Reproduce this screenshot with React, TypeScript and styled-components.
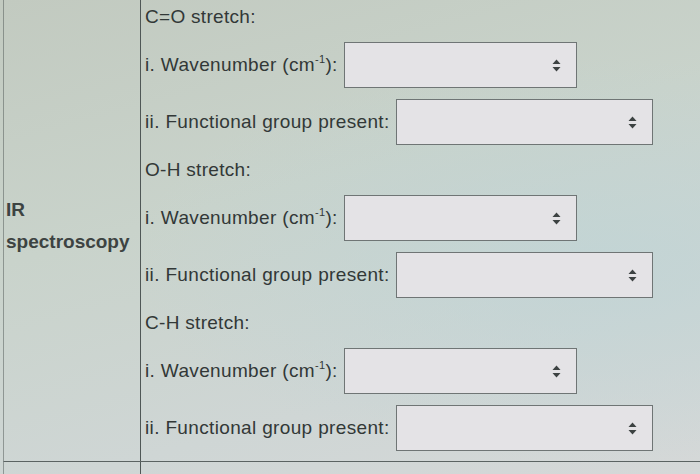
import React from 'react';
import styled, { createGlobalStyle } from 'styled-components';

const GlobalStyle = createGlobalStyle`
  html, body {
    margin: 0;
    padding: 0;
    height: 100%;
    overflow: hidden;
  }
  body {
    font-family: 'Liberation Sans', Arial, sans-serif;
    color: #323837;
    background:
      radial-gradient(ellipse at 85% 55%, rgba(190, 212, 214, 0.7) 0%, rgba(190, 212, 214, 0) 55%),
      linear-gradient(165deg, #c2cac0 0%, #c9d3cb 40%, #cfd6d5 75%, #d5d8d8 100%);
  }
`;

const Table = styled.div`
  display: grid;
  grid-template-columns: 137px 1fr;
  margin-top: -9px;
  margin-left: 3px;
  border-left: 1px solid rgba(80, 88, 86, 0.5);
  border-bottom: 1px solid #5b6362;
`;

const LabelCell = styled.div`
  display: flex;
  flex-direction: column;
  justify-content: center;
  padding-left: 2px;
  border-right: 1px solid #4f5756;
  font-size: 19px;
  font-weight: 700;
  line-height: 32px;
  color: #3d4342;
`;

const FieldCell = styled.div`
  display: flex;
  flex-direction: column;
  gap: 11px;
  padding: 12px 0 10px 4px;
`;

const Title = styled.div`
  height: 28px;
  display: flex;
  align-items: center;
  font-size: 19px;
  letter-spacing: 0.3px;
`;

const Row = styled.div`
  display: flex;
  align-items: center;
  gap: 6px;
  font-size: 19px;
  letter-spacing: 0.35px;
`;

const Sup = styled.sup`
  font-size: 11px;
  line-height: 0;
  vertical-align: 8px;
`;

const SelectBox = styled.div<{ $width: number }>`
  width: ${(p) => p.$width}px;
  height: 46px;
  box-sizing: border-box;
  display: flex;
  align-items: center;
  justify-content: flex-end;
  padding-right: 15px;
  background: #e4e3e6;
  border: 1px solid #6f7575;
`;

const Next = styled.div`
  display: grid;
  grid-template-columns: 137px 1fr;
  height: 20px;
  margin-left: 3px;
  border-left: 1px solid rgba(80, 88, 86, 0.5);
`;

const NextLabel = styled.div`
  border-right: 1px solid #4f5756;
`;

const Arrows = () => (
  <svg width="9" height="13" viewBox="0 0 9 13">
    <path d="M4.5 0.5 L8.5 5 L0.5 5 Z" fill="#3c4242" />
    <path d="M4.5 12.5 L8.5 8 L0.5 8 Z" fill="#3c4242" />
  </svg>
);

const Select = ({ width }: { width: number }) => (
  <SelectBox $width={width}>
    <Arrows />
  </SelectBox>
);

const groups = ['C=O stretch:', 'O-H stretch:', 'C-H stretch:'];

export default function App() {
  return (
    <>
      <GlobalStyle />
      <Table>
        <LabelCell>
          <span>IR</span>
          <span>spectroscopy</span>
        </LabelCell>
        <FieldCell>
          {groups.map((g) => (
            <React.Fragment key={g}>
              <Title>{g}</Title>
              <Row>
                <span>
                  i. Wavenumber (cm<Sup>-1</Sup>):
                </span>
                <Select width={233} />
              </Row>
              <Row>
                <span>ii. Functional group present:</span>
                <Select width={257} />
              </Row>
            </React.Fragment>
          ))}
        </FieldCell>
      </Table>
      <Next>
        <NextLabel />
        <div />
      </Next>
    </>
  );
}
